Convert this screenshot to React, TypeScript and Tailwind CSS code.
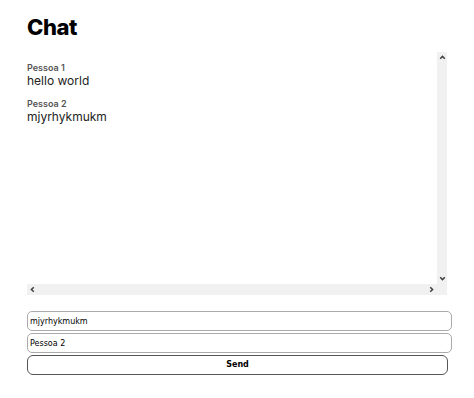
import { useState } from 'react';

type Message = { author: string; text: string };

const initial: Message[] = [
  { author: 'Pessoa 1', text: 'hello world' },
  { author: 'Pessoa 2', text: 'mjyrhykmukm' },
];

const Arrow = ({ rotate }: { rotate: string }) => (
  <svg width="7" height="7" viewBox="0 0 7 7" className={rotate}>
    <path d="M1.2 4.8 L3.5 2.4 L5.8 4.8" fill="none" stroke="#404040" strokeWidth="1.5" />
  </svg>
);

export default function App() {
  const [messages, setMessages] = useState<Message[]>(initial);
  const [text, setText] = useState('mjyrhykmukm');
  const [author, setAuthor] = useState('Pessoa 2');

  const send = () => {
    if (!text.trim()) return;
    setMessages([...messages, { author, text }]);
  };

  return (
    <div className="min-h-screen bg-white px-[27px] pt-[12px] font-['Inter',sans-serif] text-black">
      <div className="w-[420px]">
        <h1 className="text-[22px] font-extrabold leading-[30px] tracking-[-0.4px]">Chat</h1>

        {/* message list with classic scrollbars */}
        <div className="mt-[10px] flex h-[243px] flex-col">
          <div className="flex min-h-0 flex-1">
            <div className="flex-1 overflow-hidden pt-[10px]">
              {messages.map((m, i) => (
                <div key={i} className="mb-[10px]">
                  <div className="text-[9px] font-semibold leading-[12px] text-[#555]">{m.author}</div>
                  <div className="text-[12px] leading-[14px] text-[#222]">{m.text}</div>
                </div>
              ))}
            </div>
            <div className="flex w-[10px] flex-col items-center justify-between bg-[#f1f1f1] py-[2px]">
              <Arrow rotate="" />
              <Arrow rotate="rotate-180" />
            </div>
          </div>
          <div className="flex h-[11px] items-center">
            <div className="flex h-full flex-1 items-center justify-between bg-[#f1f1f1] px-[2px]">
              <Arrow rotate="-rotate-90" />
              <Arrow rotate="rotate-90" />
            </div>
            <div className="h-full w-[10px] bg-[#f1f1f1]" />
          </div>
        </div>

        <div className="mt-[16px] flex flex-col gap-[2px] font-['DejaVu_Sans',sans-serif]">
          <input
            value={text}
            onChange={(e) => setText(e.target.value)}
            className="h-[20px] w-[425px] rounded-[5px] border border-[#aaa] px-[2px] text-[8px] text-black outline-none"
          />
          <input
            value={author}
            onChange={(e) => setAuthor(e.target.value)}
            className="h-[20px] w-[425px] rounded-[5px] border border-[#aaa] px-[2px] text-[8px] text-black outline-none"
          />
          <button
            onClick={send}
            className="h-[20px] w-[421px] rounded-[6px] border border-[#555] bg-white text-[8px] font-bold text-black"
          >
            Send
          </button>
        </div>
      </div>
    </div>
  );
}
